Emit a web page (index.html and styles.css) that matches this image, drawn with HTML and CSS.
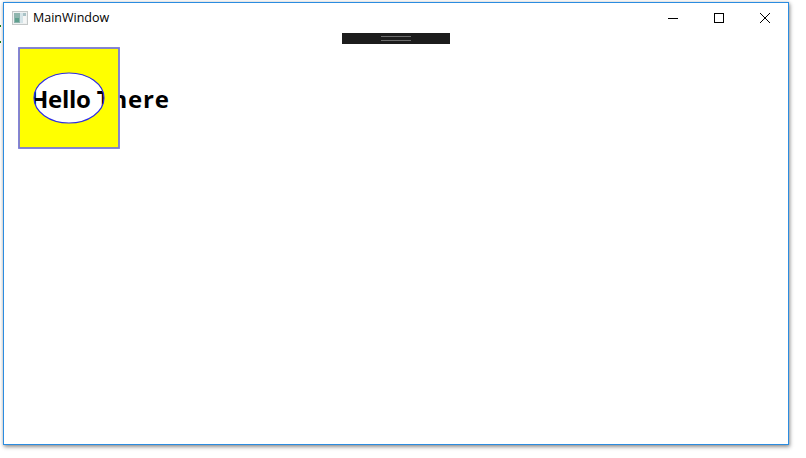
FILE: index.html
```html
<!DOCTYPE html>
<html lang="en">
<head>
<meta charset="utf-8">
<title>MainWindow</title>
<link rel="stylesheet" href="styles.css">
</head>
<body>
<span class="speck speck-a"></span>
<span class="speck speck-b"></span>
<div class="window">
  <header class="titlebar">
    <svg class="app-icon" width="16" height="16" viewBox="0 0 16 16">
      <rect x="0" y="1" width="16" height="14" fill="#c4c8c8"/>
      <rect x="1" y="2" width="14" height="12" fill="#eef1f1"/>
      <rect x="2" y="3" width="6" height="10" fill="#8fb5ae"/>
      <rect x="3" y="8" width="4" height="4" fill="#5f9f8e"/>
      <rect x="8" y="3" width="3" height="10" fill="#d5e4e8"/>
      <rect x="11" y="3" width="3" height="3" fill="#a9c2c6"/>
      <rect x="11" y="6" width="3" height="7" fill="#f5f6f6"/>
    </svg>
    <span class="title">MainWindow</span>
    <div class="caption-buttons">
      <button class="caption-button" aria-label="Minimize">
        <svg width="10" height="10" viewBox="0 0 10 10"><path d="M0 5.5H10" stroke="#000" fill="none"/></svg>
      </button>
      <button class="caption-button" aria-label="Maximize">
        <svg width="10" height="10" viewBox="0 0 10 10"><rect x="0.5" y="0.5" width="9" height="9" stroke="#000" fill="none"/></svg>
      </button>
      <button class="caption-button" aria-label="Close">
        <svg width="10" height="10" viewBox="0 0 10 10"><path d="M0 0L10 10M10 0L0 10" stroke="#000" stroke-width="1" fill="none"/></svg>
      </button>
    </div>
  </header>
  <div class="debug-bar"><span class="grip"></span></div>
  <main class="content">
    <div class="hello"><span class="hello-head">Hello</span> <span class="hello-tail">There</span></div>
    <svg class="mask" width="102" height="102" viewBox="0 0 102 102">
      <path fill="#ff0" fill-rule="evenodd"
        d="M1 1H101V101H1Z M16 51A35 25 0 1 0 86 51A35 25 0 1 0 16 51Z"/>
      <rect x="1" y="1" width="100" height="100" fill="none" stroke="#7878d4" stroke-width="1.8"/>
      <ellipse cx="51" cy="51" rx="35" ry="25" fill="none" stroke="#2c2ce8" stroke-width="1.2"/>
    </svg>
  </main>
</div>
</body>
</html>
```
FILE: styles.css
```css
html, body {
  margin: 0;
  padding: 0;
  background: #fff;
  overflow: hidden;
}
body {
  width: 806px;
  height: 458px;
  padding: 2px 0 0 3px;
  box-sizing: border-box;
  position: relative;
}
.speck {
  position: absolute;
  left: 0;
  width: 1px;
  height: 2px;
  background: #1a7a1a;
}
.speck-a { top: 25px; }
.speck-b { top: 41px; }
.window {
  width: 786px;
  height: 443px;
  box-sizing: border-box;
  border: 1px solid #2b8ce0;
  background: #fff;
  box-shadow: 1px 2px 4px rgba(0, 0, 0, 0.4), 0 0 3px rgba(0, 0, 0, 0.15);
  position: relative;
}
.titlebar {
  height: 29px;
  display: flex;
  align-items: center;
  padding-left: 8px;
}
.app-icon { flex: none; }
.title {
  margin-left: 5px;
  font: 12.5px "Open Sans", "Noto Sans", sans-serif;
  color: #000;
}
.caption-buttons {
  margin-left: auto;
  display: flex;
  align-self: flex-start;
}
.caption-button {
  width: 46px;
  height: 29px;
  border: 0;
  padding: 0;
  background: none;
  display: flex;
  align-items: center;
  justify-content: center;
}
.debug-bar {
  position: absolute;
  left: 338px;
  top: 30px;
  width: 108px;
  height: 11px;
  background: #1c1c1c;
  display: flex;
  align-items: center;
  justify-content: center;
}
.grip {
  width: 30px;
  height: 3px;
  border-top: 1px solid #6c6c6c;
  border-bottom: 1px solid #6c6c6c;
}
.content {
  padding: 50px 0 0 26px;
  position: relative;
}
.hello {
  font: 700 24px/33px "Open Sans", "Noto Sans", sans-serif;
  color: #000;
}
.hello-head {
  letter-spacing: -0.3px;
}
.hello-tail {
  letter-spacing: 0.8px;
}
.mask {
  position: absolute;
  left: 14px;
  top: 15px;
}
```
